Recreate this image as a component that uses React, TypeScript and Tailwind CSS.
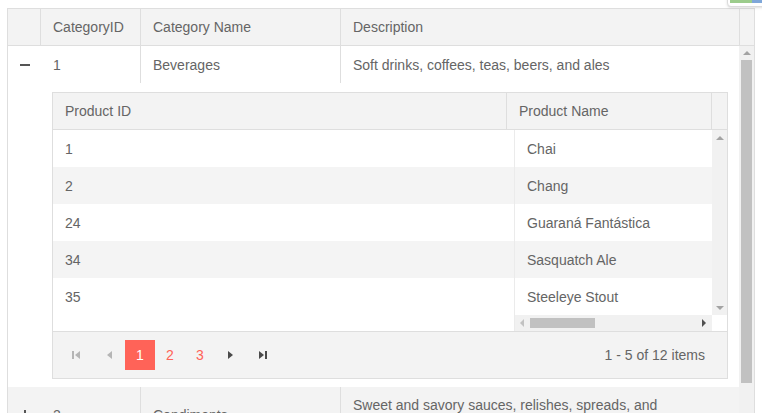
import React from "react";

const rows = [
  { id: "1", name: "Chai" },
  { id: "2", name: "Chang" },
  { id: "24", name: "Guaraná Fantástica" },
  { id: "34", name: "Sasquatch Ale" },
  { id: "35", name: "Steeleye Stout" },
];

function Tri({ dir, color, size = 4 }: { dir: "up" | "down" | "left" | "right"; color: string; size?: number }) {
  const s = size;
  let pts = "";
  if (dir === "up") pts = `0,${s} ${s},0 ${2 * s},${s}`;
  if (dir === "down") pts = `0,0 ${2 * s},0 ${s},${s}`;
  if (dir === "left") pts = `${s},0 ${s},${2 * s} 0,${s}`;
  if (dir === "right") pts = `0,0 0,${2 * s} ${s},${s}`;
  const w = dir === "up" || dir === "down" ? 2 * s : s;
  const h = dir === "up" || dir === "down" ? s : 2 * s;
  return (
    <svg width={w} height={h} viewBox={`0 0 ${w} ${h}`}>
      <polygon points={pts} fill={color} />
    </svg>
  );
}

function PagerIcon({ kind, color }: { kind: "first" | "prev" | "next" | "last"; color: string }) {
  return (
    <svg width="12" height="12" viewBox="0 0 12 12">
      {kind === "first" && (
        <>
          <rect x="2" y="2" width="2" height="8" fill={color} />
          <polygon points="10,2 10,10 5,6" fill={color} />
        </>
      )}
      {kind === "prev" && <polygon points="8,2 8,10 3,6" fill={color} />}
      {kind === "next" && <polygon points="4,2 4,10 9,6" fill={color} />}
      {kind === "last" && (
        <>
          <polygon points="2,2 2,10 7,6" fill={color} />
          <rect x="8" y="2" width="2" height="8" fill={color} />
        </>
      )}
    </svg>
  );
}

export default function App() {
  return (
    <div className="relative w-[762px] h-[413px] overflow-hidden bg-white text-[14px] leading-[20px] text-[#656565] font-['Liberation_Sans',Arial,sans-serif]">
      {/* top-right floating widget */}
      <div className="absolute left-[727px] top-[-14px] w-[44px] h-[21px] rounded-[4px] border border-[#dcdcdc] bg-white shadow-sm">
        <div className="absolute left-[2px] bottom-[3px] flex h-[4px]">
          <div className="w-[22px] bg-[#9ccc8c]" />
          <div className="w-[20px] bg-[#7fa7d9]" />
        </div>
      </div>

      <div className="ml-[7px] mt-[8px] w-[748px] border border-[#dedede]">
        {/* main header */}
        <div className="flex h-[37px] bg-[#f3f3f3] border-b border-[#dedede]">
          <div className="w-[33px] border-r border-[#dedede]" />
          <div className="w-[100px] border-r border-[#dedede] px-[12px] flex items-center">CategoryID</div>
          <div className="w-[200px] border-r border-[#dedede] px-[12px] flex items-center">Category Name</div>
          <div className="w-[398px] px-[12px] flex items-center">Description</div>
          <div className="flex-1 border-l border-[#dedede]" />
        </div>

        {/* main body */}
        <div className="flex">
          <div className="w-[731px] flex flex-col">
            {/* row 1 */}
            <div className="flex h-[37px]">
              <div className="w-[33px] flex items-center justify-center">
                <div className="w-[10px] h-[2px] bg-[#555]" />
              </div>
              <div className="w-[100px] border-r border-[#dedede] px-[12px] flex items-center">1</div>
              <div className="w-[200px] border-r border-[#dedede] px-[12px] flex items-center">Beverages</div>
              <div className="flex-1 px-[12px] flex items-center">Soft drinks, coffees, teas, beers, and ales</div>
            </div>

            {/* detail row */}
            <div className="flex h-[304px]">
              <div className="w-[33px]" />
              <div className="flex-1 pl-[11px] pr-[11px] pt-[9px]">
                <div className="w-[676px] h-[287px] border border-[#dedede] flex flex-col">
                  {/* detail header */}
                  <div className="flex h-[37px] shrink-0 bg-[#f3f3f3] border-b border-[#dedede]">
                    <div className="w-[454px] border-r border-[#dedede] px-[12px] flex items-center">Product ID</div>
                    <div className="w-[205px] border-r border-[#dedede] px-[12px] flex items-center">Product Name</div>
                    <div className="flex-1" />
                  </div>
                  {/* detail body */}
                  <div className="flex h-[201px] shrink-0">
                    <div className="w-[462px] border-r border-[#ebebeb] flex flex-col">
                      {rows.map((r, i) => (
                        <div
                          key={r.id}
                          className={`h-[37px] px-[12px] flex items-center ${i % 2 === 1 ? "bg-[#f4f4f4]" : "bg-white"}`}
                        >
                          {r.id}
                        </div>
                      ))}
                    </div>
                    <div className="flex-1 flex flex-col">
                      <div className="flex h-[185px]">
                        <div className="w-[197px] flex flex-col">
                          {rows.map((r, i) => (
                            <div
                              key={r.id}
                              className={`h-[37px] px-[12px] flex items-center whitespace-nowrap ${i % 2 === 1 ? "bg-[#f4f4f4]" : "bg-white"}`}
                            >
                              {r.name}
                            </div>
                          ))}
                        </div>
                        <div className="flex-1 bg-[#f1f1f1] flex flex-col items-center justify-between pt-[6px] pb-[5px]">
                          <Tri dir="up" color="#a3a3a3" size={4} />
                          <Tri dir="down" color="#a3a3a3" size={4} />
                        </div>
                      </div>
                      <div className="flex h-[16px]">
                        <div className="w-[197px] bg-[#f1f1f1] flex items-center">
                          <div className="ml-[5px]">
                            <Tri dir="left" color="#c2c2c2" size={4} />
                          </div>
                          <div className="ml-[6px] w-[65px] h-[10px] bg-[#c1c1c1]" />
                          <div className="ml-auto mr-[6px]">
                            <Tri dir="right" color="#505050" size={4} />
                          </div>
                        </div>
                        <div className="flex-1 bg-white" />
                      </div>
                    </div>
                  </div>
                  {/* pager */}
                  <div className="flex-1 bg-[#f3f3f3] border-t border-[#dedede] flex items-center">
                    <div className="ml-[8px] w-[30px] h-[30px] flex items-center justify-center">
                      <PagerIcon kind="first" color="#b5b5b5" />
                    </div>
                    <div className="ml-[4px] w-[30px] h-[30px] flex items-center justify-center">
                      <PagerIcon kind="prev" color="#b5b5b5" />
                    </div>
                    <div className="w-[30px] h-[30px] bg-[#ff6358] text-white flex items-center justify-center">1</div>
                    <div className="w-[30px] h-[30px] text-[#ff6358] flex items-center justify-center">2</div>
                    <div className="w-[30px] h-[30px] text-[#ff6358] flex items-center justify-center">3</div>
                    <div className="w-[30px] h-[30px] flex items-center justify-center">
                      <PagerIcon kind="next" color="#4a4a4a" />
                    </div>
                    <div className="ml-[3px] w-[30px] h-[30px] flex items-center justify-center">
                      <PagerIcon kind="last" color="#4a4a4a" />
                    </div>
                    <div className="ml-auto mr-[22px]">1 - 5 of 12 items</div>
                  </div>
                </div>
              </div>
            </div>

            {/* row 2 */}
            <div className="flex bg-[#f3f3f3]">
              <div className="w-[33px] flex items-center justify-center">
                <div className="relative w-[10px] h-[10px]">
                  <div className="absolute left-0 top-[4px] w-[10px] h-[2px] bg-[#555]" />
                  <div className="absolute left-[4px] top-0 w-[2px] h-[10px] bg-[#555]" />
                </div>
              </div>
              <div className="w-[100px] border-r border-[#dedede] px-[12px] flex items-center">2</div>
              <div className="w-[200px] border-r border-[#dedede] px-[12px] flex items-center">Condiments</div>
              <div className="flex-1 px-[12px] py-[8px]">
                Sweet and savory sauces, relishes, spreads, and seasonings
              </div>
            </div>
          </div>

          {/* main scrollbar */}
          <div className="flex-1 bg-[#f1f1f1] flex flex-col items-center">
            <div className="h-[14px] flex items-center justify-center">
              <Tri dir="up" color="#a3a3a3" size={4} />
            </div>
            <div className="w-[11px] h-[323px] bg-[#c1c1c1]" />
          </div>
        </div>
      </div>
    </div>
  );
}
